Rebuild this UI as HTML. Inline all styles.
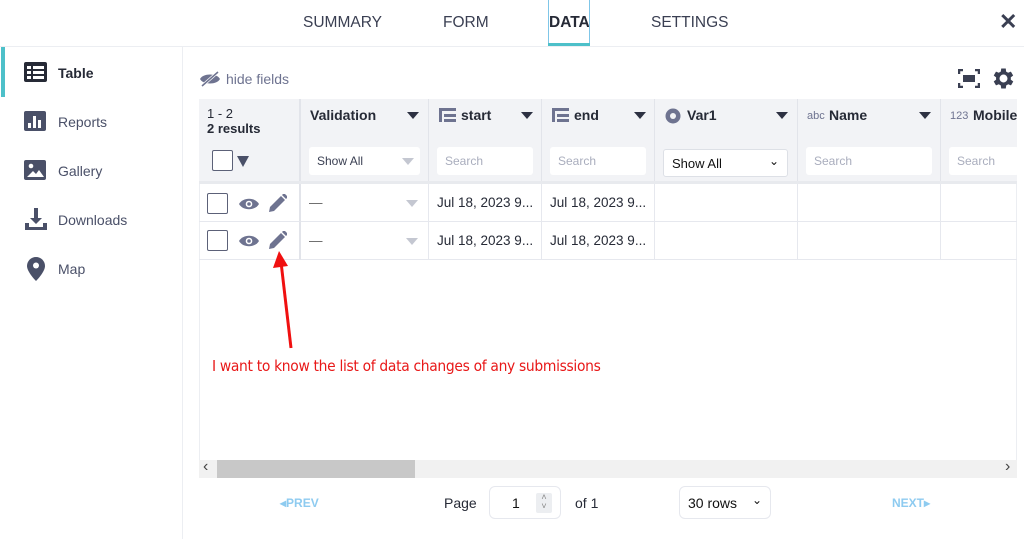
<!DOCTYPE html>
<html><head><meta charset="utf-8"><style>
*{box-sizing:border-box;margin:0;padding:0}
body{width:1024px;height:539px;overflow:hidden;background:#fff;font-family:"Liberation Sans",Arial,sans-serif;color:#3a3f52;position:relative}
.abs{position:absolute}
.tab{position:absolute;top:14px;font-size:15.5px;color:#3a3f52}
.side{position:absolute;left:58px;font-size:14px;color:#4a5068}
.hd{position:absolute;top:99px;height:84px;background:#f2f3f6;border-right:1px solid #e2e4ea}
.hd b{position:absolute;left:9px;top:8px;font-size:14px;color:#262a36}
.tri{position:absolute;top:13px;width:0;height:0;border-left:6px solid transparent;border-right:6px solid transparent;border-top:7px solid #2d3142}
.inp{position:absolute;top:48px;height:28px;background:#fff;border-radius:3px;font-size:12px;color:#a9adbd;padding:7px 8px}
.cell{position:absolute;height:38px;border-right:1px solid #e6e8ee;border-bottom:1px solid #e6e8ee;font-size:13.5px;color:#262a36;padding:11px 8px;white-space:nowrap;overflow:hidden}
.cb{position:absolute;width:21px;height:21px;border:1px solid #5c6178;border-radius:2px;background:#fff}
</style></head><body>
<div class="tab" style="left:303px">SUMMARY</div>
<div class="tab" style="left:443px">FORM</div>
<div class="tab" style="left:549px;font-weight:bold;color:#262a36">DATA</div>
<div class="abs" style="left:548px;top:0;width:42px;height:46px;border:1px solid #7fc6e8;border-top:none"></div>
<div class="abs" style="left:548px;top:43px;width:42px;height:4px;background:#4dc0c9"></div>
<div class="tab" style="left:651px">SETTINGS</div>
<div class="abs" style="left:999px;top:9px;font-size:22px;font-weight:bold;color:#3a3f52">✕</div>
<div class="abs" style="left:0;top:46px;width:1024px;height:1px;background:#eceef2"></div>
<div class="abs" style="left:182px;top:47px;width:1px;height:492px;background:#eceef2"></div>
<div class="abs" style="left:1px;top:47px;width:4px;height:50px;background:#4dc0c9"></div>
<svg class="abs" style="left:24px;top:62px" width="24" height="21"><rect x="0" y="0" width="23" height="20" rx="2" fill="#262a36"/><g fill="#fff"><rect x="3" y="4" width="4" height="3"/><rect x="9" y="4" width="11" height="3"/><rect x="3" y="9" width="4" height="3"/><rect x="9" y="9" width="11" height="3"/><rect x="3" y="14" width="4" height="3"/><rect x="9" y="14" width="11" height="3"/></g></svg>
<div class="side" style="top:65px;font-weight:bold;color:#262a36">Table</div>
<svg class="abs" style="left:24px;top:111px" width="23" height="21"><rect width="22" height="20" rx="2" fill="#4a5068"/><g fill="#fff"><rect x="4" y="12" width="3" height="5"/><rect x="9" y="5" width="3" height="12"/><rect x="14" y="9" width="3" height="8"/></g></svg>
<div class="side" style="top:114px">Reports</div>
<svg class="abs" style="left:24px;top:160px" width="23" height="21"><rect width="22" height="20" rx="2" fill="#4a5068"/><circle cx="7" cy="6" r="2.3" fill="#fff"/><path d="M3 17 L9 11 L12 14 L15 10 L20 17 Z" fill="#fff"/></svg>
<div class="side" style="top:163px">Gallery</div>
<svg class="abs" style="left:25px;top:208px" width="22" height="23"><path d="M9 0h4v10h4l-6 6-6-6h4z M0 15h4v4h14v-4h4v7H0z" fill="#4a5068"/></svg>
<div class="side" style="top:212px">Downloads</div>
<svg class="abs" style="left:27px;top:257px" width="18" height="24"><path d="M9 0C4 0 0 4 0 9c0 6 9 15 9 15s9-9 9-15c0-5-4-9-9-9z" fill="#4a5068"/><circle cx="9" cy="8.5" r="3" fill="#fff"/></svg>
<div class="side" style="top:261px">Map</div>

<svg class="abs" style="left:199px;top:70px" width="22" height="18"><path d="M1 9C4 3 18 3 21 9C18 15 4 15 1 9Z" fill="#6e7390"/><path d="M3 16L19 2" stroke="#fff" stroke-width="3"/><path d="M3 16L19 2" stroke="#6e7390" stroke-width="1.5"/></svg>
<div class="abs" style="left:226px;top:71px;font-size:14px;color:#6e7390">hide fields</div>
<svg class="abs" style="left:958px;top:69px" width="22" height="19" fill="none" stroke="#3a3f52" stroke-width="2.5"><path d="M1 5V1H5M17 1H21V5M21 14V18H17M5 18H1V14"/><rect x="5" y="6" width="12" height="7" fill="#3a3f52" stroke="none"/></svg>
<svg class="abs" style="left:991px;top:66px" width="25" height="25" viewBox="2 1 22 22"><path fill="#3a3f52" d="M19.4 13a7.5 7.5 0 0 0 0-2l2.1-1.6-2-3.5-2.5 1a7.6 7.6 0 0 0-1.7-1L15 3.2h-4l-.4 2.7a7.6 7.6 0 0 0-1.7 1l-2.5-1-2 3.5L6.5 11a7.5 7.5 0 0 0 0 2l-2.1 1.6 2 3.5 2.5-1a7.6 7.6 0 0 0 1.7 1l.4 2.7h4l.4-2.7a7.6 7.6 0 0 0 1.7-1l2.5 1 2-3.5zM13 15.5a3.5 3.5 0 1 1 0-7 3.5 3.5 0 0 1 0 7z"/></svg>

<div class="abs" style="left:199px;top:99px;width:818px;height:379px;border:1px solid #eceef2"></div>
<div class="hd" style="left:199px;width:102px;border-right:2px solid #e2e4ea">
<div class="abs" style="left:8px;top:7px;font-size:13px;color:#262a36">1 - 2</div>
<div class="abs" style="left:8px;top:22px;font-size:13px;font-weight:bold;color:#262a36">2 results</div>
<div class="cb" style="left:13px;top:51px"></div>
<div class="abs" style="left:38px;top:57px;border-left:6px solid transparent;border-right:6px solid transparent;border-top:11px solid #4a5068"></div>
</div>
<div class="hd" style="left:301px;width:128px"><b>Validation</b><div class="tri" style="left:106px"></div><div class="inp" style="left:8px;width:111px;color:#3a3f52">Show All<span style="position:absolute;right:6px;top:11px;border-left:6px solid transparent;border-right:6px solid transparent;border-top:7px solid #c4c7d1"></span></div></div>
<div class="hd" style="left:429px;width:113px"><svg class="abs" style="left:10px;top:9px" width="17" height="15" fill="#6e7390"><rect width="17" height="3"/><rect x="0" y="3" width="3" height="11"/><rect x="5" y="6" width="12" height="3"/><rect x="5" y="11" width="12" height="3"/></svg><b style="left:32px">start</b><div class="tri" style="left:92px"></div><div class="inp" style="left:8px;width:96px">Search</div></div>
<div class="hd" style="left:542px;width:113px"><svg class="abs" style="left:10px;top:9px" width="17" height="15" fill="#6e7390"><rect width="17" height="3"/><rect x="0" y="3" width="3" height="11"/><rect x="5" y="6" width="12" height="3"/><rect x="5" y="11" width="12" height="3"/></svg><b style="left:32px">end</b><div class="tri" style="left:92px"></div><div class="inp" style="left:8px;width:96px">Search</div></div>
<div class="hd" style="left:655px;width:143px"><svg class="abs" style="left:10px;top:9px" width="16" height="16"><circle cx="8" cy="8" r="7.5" fill="#6e7390"/><circle cx="8" cy="8" r="3" fill="#f2f3f6"/></svg><b style="left:32px">Var1</b><div class="tri" style="left:121px"></div><div class="inp" style="left:8px;top:50px;width:125px;border:1px solid #dde0e6;color:#111;font-size:13px;padding:6px 8px">Show All<span style="position:absolute;right:8px;top:4px;font-size:12px">⌄</span></div></div>
<div class="hd" style="left:798px;width:143px"><span class="abs" style="left:9px;top:11px;font-size:11px;color:#6e7390">abc</span><b style="left:31px">Name</b><div class="tri" style="left:121px"></div><div class="inp" style="left:8px;width:126px">Search</div></div>
<div class="hd" style="left:941px;width:76px;border-right:none"><span class="abs" style="left:9px;top:11px;font-size:11px;color:#6e7390">123</span><b style="left:32px">Mobile</b><div class="inp" style="left:8px;width:70px">Search</div></div>
<div class="abs" style="left:199px;top:181px;width:818px;height:3px;background:#e8eaee"></div>

<div class="cell" style="left:199px;top:184px;width:102px;border-right:2px solid #e2e4ea"></div>
<div class="cell" style="left:199px;top:222px;width:102px;border-right:2px solid #e2e4ea"></div>
<div class="cb" style="left:207px;top:193px"></div><div class="cb" style="left:207px;top:230px"></div>
<svg class="abs" style="left:238px;top:197px" width="22" height="14"><path d="M1 7C5 0 17 0 21 7C17 14 5 14 1 7Z" fill="#6e7390"/><circle cx="11" cy="7" r="3.3" fill="#fff"/><circle cx="11" cy="7" r="1.8" fill="#6e7390"/></svg>
<svg class="abs" style="left:238px;top:234px" width="22" height="14"><path d="M1 7C5 0 17 0 21 7C17 14 5 14 1 7Z" fill="#6e7390"/><circle cx="11" cy="7" r="3.3" fill="#fff"/><circle cx="11" cy="7" r="1.8" fill="#6e7390"/></svg>
<svg class="abs" style="left:268px;top:194px" width="19" height="19"><path d="M1 18L2 13L13 2L17 6L6 17Z M14 1L16 -1L20 3L18 5Z" fill="#6e7390"/></svg>
<svg class="abs" style="left:268px;top:231px" width="19" height="19"><path d="M1 18L2 13L13 2L17 6L6 17Z M14 1L16 -1L20 3L18 5Z" fill="#6e7390"/></svg>
<div class="cell" style="left:301px;top:184px;width:128px;color:#666">—<span style="position:absolute;right:10px;top:16px;border-left:6px solid transparent;border-right:6px solid transparent;border-top:7px solid #c4c7d1"></span></div>
<div class="cell" style="left:301px;top:222px;width:128px;color:#666">—<span style="position:absolute;right:10px;top:16px;border-left:6px solid transparent;border-right:6px solid transparent;border-top:7px solid #c4c7d1"></span></div>
<div class="cell" style="left:429px;top:184px;width:113px">Jul 18, 2023 9...</div>
<div class="cell" style="left:429px;top:222px;width:113px">Jul 18, 2023 9...</div>
<div class="cell" style="left:542px;top:184px;width:113px">Jul 18, 2023 9...</div>
<div class="cell" style="left:542px;top:222px;width:113px">Jul 18, 2023 9...</div>
<div class="cell" style="left:655px;top:184px;width:143px"></div><div class="cell" style="left:655px;top:222px;width:143px"></div>
<div class="cell" style="left:798px;top:184px;width:143px"></div><div class="cell" style="left:798px;top:222px;width:143px"></div>
<div class="cell" style="left:941px;top:184px;width:76px;border-right:none"></div><div class="cell" style="left:941px;top:222px;width:76px;border-right:none"></div>

<svg class="abs" style="left:270px;top:250px" width="30" height="105"><path d="M21 98L11 12" stroke="#f01010" stroke-width="3"/><path d="M9 1L3 18L18 16Z" fill="#f01010"/></svg>
<div class="abs" style="left:212px;top:357px;font-size:15px;color:#e81818;font-family:'DejaVu Sans',sans-serif;letter-spacing:-0.35px;transform:scaleX(0.925);transform-origin:0 0;white-space:nowrap">I want to know the list of data changes of any submissions</div>

<div class="abs" style="left:199px;top:460px;width:818px;height:18px;background:#f1f1f1"></div>
<div class="abs" style="left:217px;top:460px;width:198px;height:18px;background:#c8c8c8"></div>
<div class="abs" style="left:203px;top:458px;font-size:16px;color:#444">‹</div>
<div class="abs" style="left:1005px;top:458px;font-size:16px;color:#444">›</div>

<div class="abs" style="left:280px;top:496px;font-size:12px;font-weight:bold;color:#8ecbf0">◂PREV</div>
<div class="abs" style="left:444px;top:495px;font-size:14px;color:#262a36">Page</div>
<div class="abs" style="left:489px;top:486px;width:72px;height:33px;border:1px solid #e6e8ee;border-radius:6px"></div>
<div class="abs" style="left:512px;top:495px;font-size:14px;color:#111">1</div>
<div class="abs" style="left:536px;top:493px;width:16px;height:20px;background:#eceef1;border-radius:2px;font-size:9px;color:#888;text-align:center;line-height:9px">˄<br>˅</div>
<div class="abs" style="left:575px;top:495px;font-size:14px;color:#262a36">of 1</div>
<div class="abs" style="left:679px;top:486px;width:92px;height:33px;border:1px solid #e6e8ee;border-radius:6px;font-size:14px;color:#111;padding:8px 8px">30 rows<span style="position:absolute;right:8px;top:6px;font-size:12px">⌄</span></div>
<div class="abs" style="left:892px;top:496px;font-size:12px;font-weight:bold;color:#8ecbf0">NEXT▸</div>
</body></html>
